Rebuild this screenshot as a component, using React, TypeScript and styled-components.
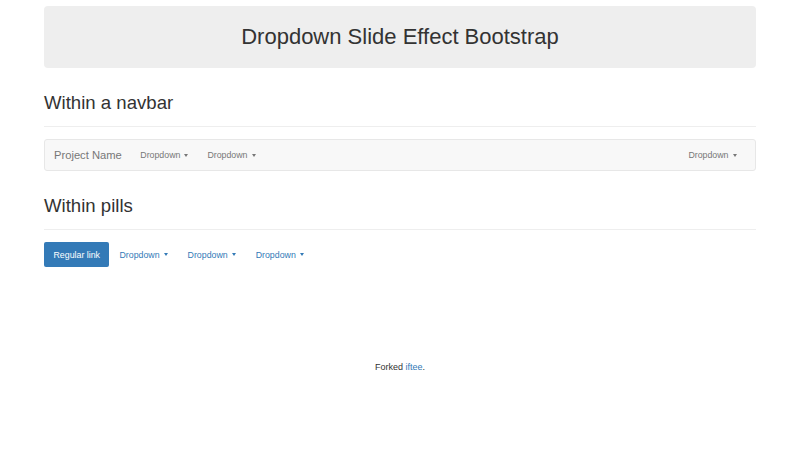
import React from "react";
import styled, { createGlobalStyle } from "styled-components";

const GlobalStyle = createGlobalStyle`
  html, body {
    margin: 0;
    padding: 0;
    background: #fff;
    font-family: "Liberation Sans", Arial, Helvetica, sans-serif;
    color: #333;
  }
`;

const Container = styled.div`
  width: 712px;
  margin: 0 auto;
  padding-top: 6px;
`;

const Jumbotron = styled.div`
  background: #eee;
  border-radius: 4px;
  height: 62px;
  display: flex;
  align-items: center;
  justify-content: center;

  h1 {
    margin: 0;
    font-size: 22px;
    font-weight: 400;
    color: #333;
  }
`;

const Section = styled.h3`
  margin: 0;
  padding-top: 24px;
  padding-bottom: 12px;
  font-size: 18.6px;
  font-weight: 400;
  line-height: 22px;
  color: #333;
  border-bottom: 1px solid #eee;
`;

const Navbar = styled.nav`
  margin-top: 12px;
  height: 30px;
  background: #f8f8f8;
  border: 1px solid #e7e7e7;
  border-radius: 3px;
  display: flex;
  align-items: center;
  padding: 0 9px;
`;

const Brand = styled.span`
  font-size: 11.2px;
  color: #777;
  margin-right: 9px;
`;

const NavLink = styled.a<{ $pill?: boolean }>`
  display: inline-flex;
  align-items: center;
  padding: 0 ${(p) => (p.$pill ? "10px" : "9.5px")};
  font-size: 8.8px;
  color: ${(p) => (p.$pill ? "#337ab7" : "#777")};
  text-decoration: none;
  cursor: pointer;
`;

const Caret = styled.span`
  display: inline-block;
  width: 0;
  height: 0;
  margin-left: 4px;
  border-top: 3px solid currentColor;
  border-left: 2.5px solid transparent;
  border-right: 2.5px solid transparent;
`;

const Spacer = styled.div`
  flex: 1;
`;

const Pills = styled.div`
  margin-top: 12px;
  display: flex;
  align-items: center;
  height: 25px;
`;

const ActivePill = styled.a`
  display: inline-flex;
  align-items: center;
  height: 25px;
  padding: 0 9.5px;
  background: #337ab7;
  color: #fff;
  font-size: 8.8px;
  border-radius: 2px;
`;

const Footer = styled.p`
  margin: 95px 0 0;
  text-align: center;
  font-size: 9px;
  color: #333;

  a {
    color: #337ab7;
    text-decoration: none;
  }
`;

const Dropdown = ({ pill }: { pill?: boolean }) => (
  <NavLink $pill={pill}>
    Dropdown
    <Caret />
  </NavLink>
);

export default function App() {
  return (
    <>
      <GlobalStyle />
      <Container>
        <Jumbotron>
          <h1>Dropdown Slide Effect Bootstrap</h1>
        </Jumbotron>

        <Section>Within a navbar</Section>
        <Navbar>
          <Brand>Project Name</Brand>
          <Dropdown />
          <Dropdown />
          <Spacer />
          <Dropdown />
        </Navbar>

        <Section>Within pills</Section>
        <Pills>
          <ActivePill>Regular link</ActivePill>
          <Dropdown pill />
          <Dropdown pill />
          <Dropdown pill />
        </Pills>

        <Footer>
          Forked <a>iftee</a>.
        </Footer>
      </Container>
    </>
  );
}
